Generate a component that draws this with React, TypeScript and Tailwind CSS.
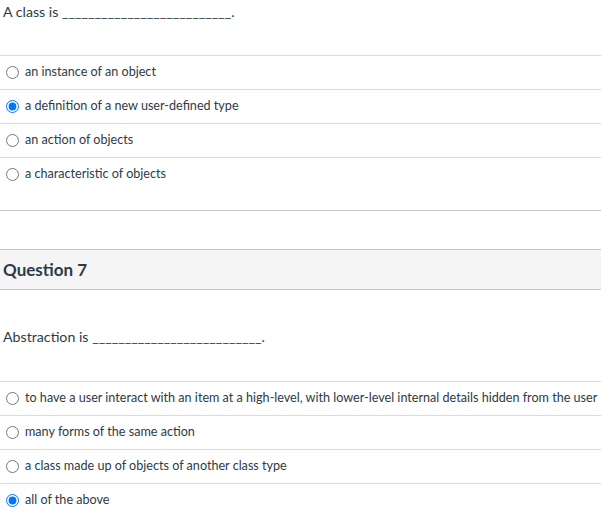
import React from "react";

const font = { fontFamily: "Lato, 'Noto Sans', sans-serif" };

function Answer({ text, checked }: { text: string; checked?: boolean }) {
  return (
    <div className="h-[34px] border-t border-[#dadada] flex items-center pl-[6px]">
      <input
        type="radio"
        checked={!!checked}
        readOnly
        className="m-0 w-[13px] h-[13px] shrink-0"
      />
      <span className="ml-[6px] text-[12.6px] text-[#2d3b45] whitespace-nowrap">{text}</span>
    </div>
  );
}

export default function App() {
  const blank = "__________________________";
  return (
    <div className="w-[601px] h-[517px] overflow-hidden bg-white" style={font}>
      <div className="border-b border-[#c4c4c4]">
        <div className="h-[55px] pl-[3px] pt-[2px] text-[14.2px] leading-[20px] text-[#2d3b45]">
          A class is {blank}.
        </div>
        <Answer text="an instance of an object" />
        <Answer text="a definition of a new user-defined type" checked />
        <Answer text="an action of objects" />
        <Answer text="a characteristic of objects" />
        <div className="h-[19px]" />
      </div>
      <div className="h-[38px]" />
      <div className="h-[41px] border-y border-[#c4c4c4] bg-[#f5f5f5] flex items-center pl-[3px]">
        <span className="text-[17px] font-bold text-[#2d3b45]">Question 7</span>
      </div>
      <div className="h-[91px] pl-[3px] pt-[37px] text-[14.2px] leading-[20px] text-[#2d3b45]">
        Abstraction is {blank}.
      </div>
      <Answer text="to have a user interact with an item at a high-level, with lower-level internal details hidden from the user" />
      <Answer text="many forms of the same action" />
      <Answer text="a class made up of objects of another class type" />
      <Answer text="all of the above" checked />
    </div>
  );
}
